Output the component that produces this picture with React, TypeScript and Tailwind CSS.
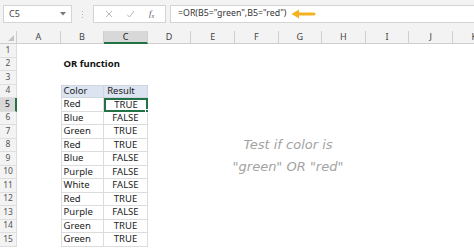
import React from "react";

const COLS = ["A", "B", "C", "D", "E", "F", "G", "H", "I", "J", "K"];

const ROWS: { color: string; result: string }[] = [
  { color: "Red", result: "TRUE" },
  { color: "Blue", result: "FALSE" },
  { color: "Green", result: "TRUE" },
  { color: "Red", result: "TRUE" },
  { color: "Blue", result: "FALSE" },
  { color: "Purple", result: "FALSE" },
  { color: "White", result: "FALSE" },
  { color: "Red", result: "TRUE" },
  { color: "Purple", result: "FALSE" },
  { color: "Green", result: "TRUE" },
  { color: "Green", result: "TRUE" },
];

const FormulaBar = () => (
  <div className="h-[31px] bg-[#f3f3f3] flex items-start pt-[5px] pl-[3px]">
    {/* name box */}
    <div className="w-[69px] h-[18px] bg-white border border-[#d4d4d4] flex items-center justify-between pl-[5px] pr-[5px]">
      <span className="text-[9px] text-[#444]">C5</span>
      <svg width="6" height="4" viewBox="0 0 6 4">
        <path d="M0 0 L6 0 L3 3.5 Z" fill="#777" />
      </svg>
    </div>
    {/* dots */}
    <div className="w-[21px] h-[18px] flex flex-col items-center justify-center gap-[2px]">
      <span className="w-[1px] h-[1px] bg-[#b5b5b5]" />
      <span className="w-[1px] h-[1px] bg-[#b5b5b5]" />
      <span className="w-[1px] h-[1px] bg-[#b5b5b5]" />
    </div>
    {/* icons */}
    <div className="w-[73px] h-[18px] bg-white border border-[#d4d4d4] flex items-center justify-around px-[4px]">
      <svg width="8" height="8" viewBox="0 0 8 8">
        <path d="M1 1 L7 7 M7 1 L1 7" stroke="#b8b8b8" strokeWidth="1" />
      </svg>
      <svg width="9" height="8" viewBox="0 0 9 8">
        <path d="M1 4.5 L3.5 7 L8 1" stroke="#b8b8b8" strokeWidth="1" fill="none" />
      </svg>
      <span className="text-[9px] italic text-[#555] font-['Liberation_Serif',serif]">
        f<sub className="text-[6px]">x</sub>
      </span>
    </div>
    {/* formula */}
    <div className="ml-[4px] flex-1 h-[18px] bg-white border border-[#d4d4d4] border-r-0 flex items-center pl-[7px]">
      <span className="text-[8.8px] text-[#333] whitespace-nowrap">=OR(B5="green",B5="red")</span>
      <svg width="26" height="10" viewBox="0 0 26 10" className="ml-[4px]">
        <path d="M24 5 L7 5" stroke="#f4b120" strokeWidth="3" strokeLinecap="round" />
        <path d="M9 0.5 L1.5 5 L9 9.5 Z" fill="#f4b120" />
      </svg>
    </div>
  </div>
);

export default function App() {
  return (
    <div className="w-[474px] h-[248px] overflow-hidden bg-white relative font-['Noto_Sans',sans-serif]">
      <FormulaBar />
      <div className="grid grid-cols-[17px_repeat(11,43.6px)] grid-rows-[13px_repeat(15,13.5px)]">
        {/* corner */}
        <div className="bg-[#f3f3f3] border-b border-r border-[#cfcfcf] flex items-end justify-end p-[2px]">
          <svg width="6" height="6" viewBox="0 0 6 6">
            <path d="M6 0 L6 6 L0 6 Z" fill="#c3c3c3" />
          </svg>
        </div>
        {COLS.map((c) => (
          <div
            key={c}
            className={
              c === "C"
                ? "bg-[#d8d8d8] border-b-2 border-[#217346] border-r border-r-[#cfcfcf] flex items-center justify-center text-[9px] text-[#222]"
                : "bg-[#f3f3f3] border-b border-[#cfcfcf] border-r flex items-center justify-center text-[9px] text-[#444]"
            }
          >
            {c}
          </div>
        ))}

        {Array.from({ length: 15 }, (_, i) => {
          const r = i + 1;
          return (
            <React.Fragment key={r}>
              <div
                className={
                  r === 5
                    ? "bg-[#d8d8d8] border-r-2 border-[#217346] border-b border-b-[#dedede] flex items-center justify-center text-[8.5px] text-[#222]"
                    : "bg-[#f3f3f3] border-r border-b border-[#dedede] flex items-center justify-center text-[8.5px] text-[#555]"
                }
              >
                {r}
              </div>
              {/* A */}
              <div />
              {r === 2 && (
                <div className="col-span-2 flex items-center pl-[3px] text-[9.5px] font-bold text-[#111] whitespace-nowrap">
                  OR function
                </div>
              )}
              {r === 4 && (
                <>
                  <div className="bg-[#dce4f1] border border-[#cfd6e2] flex items-center pl-[2px] text-[9.5px] text-[#222]">
                    Color
                  </div>
                  <div className="bg-[#dce4f1] border-y border-r border-[#cfd6e2] flex items-center pl-[3px] text-[9.5px] text-[#222]">
                    Result
                  </div>
                </>
              )}
              {r >= 5 && (
                <>
                  <div className="border-x border-b border-[#dcdcdc] flex items-center pl-[2px] text-[9.5px] text-[#222]">
                    {ROWS[r - 5].color}
                  </div>
                  {r === 5 ? (
                    <div className="relative border-2 border-[#217346] flex items-center justify-center text-[9.5px] text-[#222]">
                      {ROWS[0].result}
                      <span className="absolute -right-[3px] -bottom-[3px] w-[4px] h-[4px] bg-[#217346] border border-white" />
                    </div>
                  ) : (
                    <div className="border-r border-b border-[#dcdcdc] flex items-center justify-center text-[9.5px] text-[#222]">
                      {ROWS[r - 5].result}
                    </div>
                  )}
                </>
              )}
              {r !== 2 && r < 4 && (
                <>
                  <div />
                  <div />
                </>
              )}
              {Array.from({ length: 8 }, (_, k) => (
                <div key={k} />
              ))}
            </React.Fragment>
          );
        })}
      </div>

      {/* text box note */}
      <div className="absolute left-[226px] top-[134px] w-[124px] text-center text-[13px] leading-[22px] italic text-[#a3a3a3] font-['DejaVu_Sans',sans-serif]">
        Test if color is
        <br />
        "green" OR "red"
      </div>
    </div>
  );
}
